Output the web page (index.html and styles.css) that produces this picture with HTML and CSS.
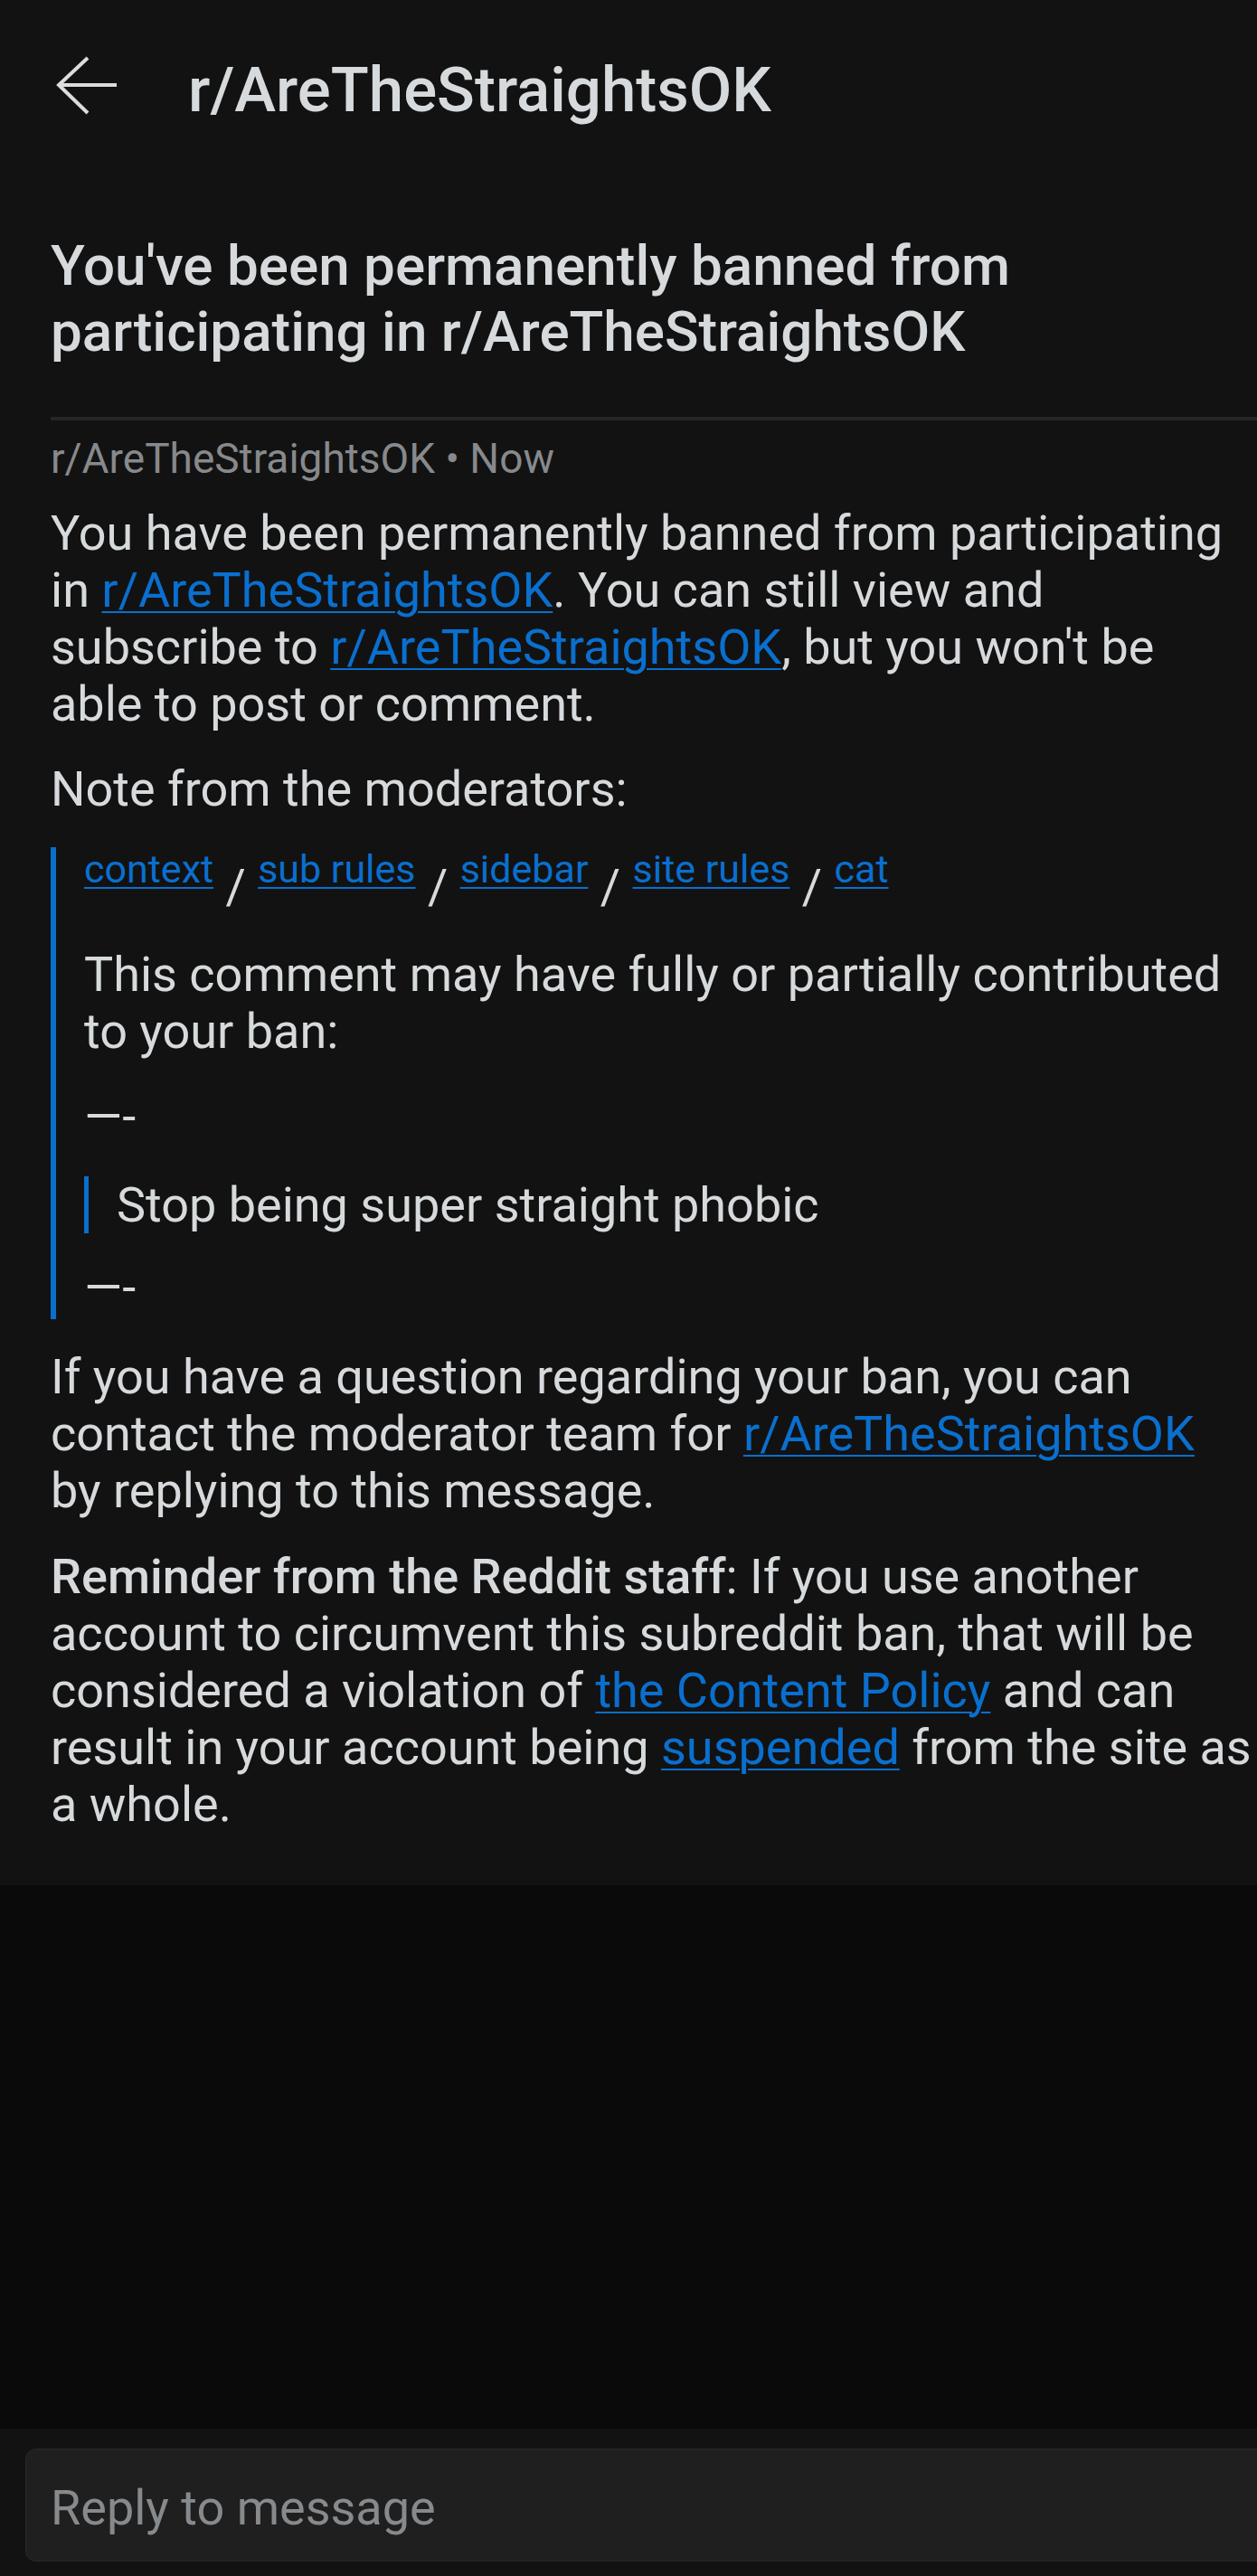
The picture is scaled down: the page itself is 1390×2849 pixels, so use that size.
FILE: index.html
```html
<!DOCTYPE html>
<html lang="en">
<head>
<meta charset="utf-8">
<title>r/AreTheStraightsOK</title>
<link rel="stylesheet" href="styles.css">
</head>
<body>
<div class="screen">
  <section class="card">
    <header class="topbar">
      <svg class="back" width="76" height="76" viewBox="0 0 76 76" aria-hidden="true">
        <path d="M39 6 L7 36 L39 67 M7 36 H71" fill="none" stroke="#dcdcdc" stroke-width="4" stroke-linejoin="miter"/>
      </svg>
      <div class="topbar-title">r/AreTheStraightsOK</div>
    </header>

    <h1 class="headline">You've been permanently banned from participating in r/AreTheStraightsOK</h1>
    <div class="divider"></div>

    <div class="meta">r/AreTheStraightsOK • Now</div>

    <p class="body p-first">You have been permanently banned from participating in <a href="#">r/AreTheStraightsOK</a>. You can still view and subscribe to <a href="#">r/AreTheStraightsOK</a>, but you won't be able to post or comment.</p>

    <p class="body p-note">Note from the moderators:</p>

    <blockquote class="quote">
      <p class="body links"><span class="sup"><a href="#">context</a></span> / <span class="sup"><a href="#">sub rules</a></span> / <span class="sup"><a href="#">sidebar</a></span> / <span class="sup"><a href="#">site rules</a></span> / <span class="sup"><a href="#">cat</a></span></p>
      <p class="body q-comment">This comment may have fully or partially contributed to your ban:</p>
      <p class="body q-dash1">—-</p>
      <blockquote class="inner-quote">
        <p class="body">Stop being super straight phobic</p>
      </blockquote>
      <p class="body q-dash2">—-</p>
    </blockquote>

    <p class="body p-question">If you have a question regarding your ban, you can contact the moderator team for <a href="#">r/AreTheStraightsOK</a> by replying to this message.</p>

    <p class="body p-reminder"><strong>Reminder from the Reddit staff</strong>: If you use another account to circumvent this subreddit ban, that will be considered a violation of <a href="#">the Content Policy</a> and can result in your account being <a href="#">suspended</a> from the site as a whole.</p>
  </section>

  <div class="spacer"></div>

  <footer class="reply-bar">
    <div class="reply-box">Reply to message</div>
  </footer>
</div>
</body>
</html>
```

FILE: styles.css
```css
* {
  box-sizing: border-box;
}

html, body {
  margin: 0;
  padding: 0;
  background: #0a0a0a;
}

body {
  font-family: Roboto, "Noto Sans", "Liberation Sans", sans-serif;
  color: #d7dadc;
  overflow: hidden;
}

.screen {
  width: 1390px;
  height: 2849px;
  display: flex;
  flex-direction: column;
}

.card {
  background: #121212;
  padding: 0 3px 58px 56px;
}

.topbar {
  display: flex;
  align-items: flex-start;
  height: 200px;
  padding-top: 58px;
  margin-left: -56px;
  padding-left: 58px;
}

.back {
  display: block;
  flex: none;
}

.topbar-title {
  margin-left: 74px;
  margin-top: 2px;
  font-size: 69px;
  line-height: 80px;
  font-weight: 500;
  color: #d7dadc;
}

.headline {
  margin: 57px 0 0;
  font-size: 62px;
  line-height: 73px;
  font-weight: 500;
  color: #d7dadc;
}

.divider {
  height: 4px;
  background: #262626;
  margin-top: 58px;
  margin-right: -3px;
}

.meta {
  margin-top: 16px;
  font-size: 46px;
  line-height: 52px;
  color: #87898c;
}

.body {
  margin: 0;
  font-size: 54px;
  line-height: 63px;
  color: #d7dadc;
}

.body a {
  color: #0a6fce;
  text-decoration: underline;
  text-decoration-thickness: 2px;
  text-underline-offset: 5px;
}

.p-first {
  margin-top: 25px;
}

.p-note {
  margin-top: 31px;
}

.quote {
  margin: 33px 0 0;
  border-left: 6px solid #0a6fce;
  padding: 12px 0 4px 31px;
}

.sup {
  font-size: 43px;
  line-height: 0;
  vertical-align: 23px;
}

.q-comment {
  margin-top: 34px;
}

.q-dash1 {
  margin-top: 31px;
}

.inner-quote {
  margin: 35px 0 0;
  border-left: 5px solid #0a6fce;
  padding-left: 31px;
}

.q-dash2 {
  margin-top: 28px;
}

.p-question {
  margin-top: 32px;
}

.p-reminder {
  margin-top: 32px;
}

.p-reminder strong {
  font-weight: 500;
}

.spacer {
  flex: 1;
  background: #0a0a0a;
}

.reply-bar {
  height: 163px;
  background: #121212;
  padding: 22px 0 0 28px;
}

.reply-box {
  height: 125px;
  margin-right: -40px;
  background: #1f1f1f;
  border: 1px solid #282828;
  border-radius: 12px;
  padding: 33px 0 0 27px;
  font-size: 54px;
  line-height: 63px;
  color: #878a8d;
}
```
